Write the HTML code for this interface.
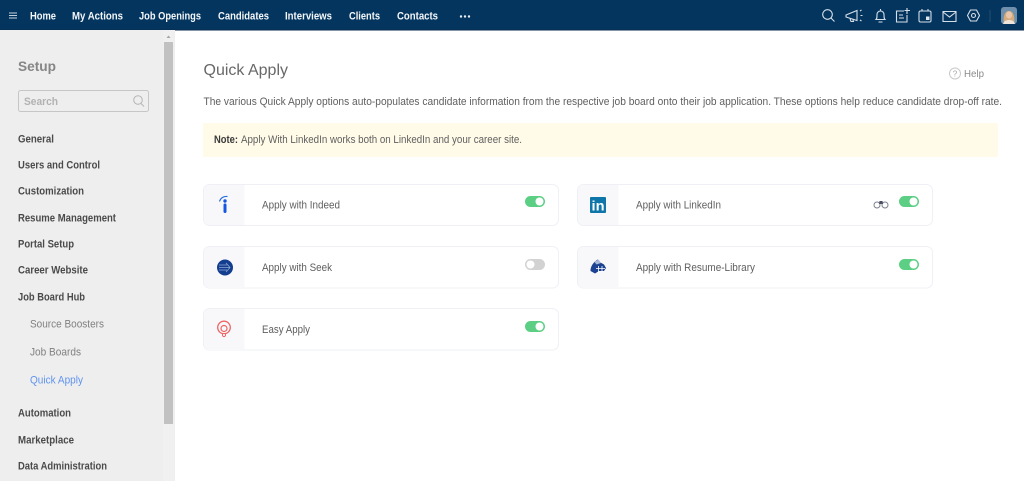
<!DOCTYPE html>
<html><head><meta charset="utf-8"><title>Quick Apply</title>
<style>
html,body{margin:0;padding:0;width:1024px;height:481px;overflow:hidden;background:#fff}
svg{display:block;font-family:"Liberation Sans",sans-serif;filter:blur(.35px)}
.nav{font-size:10.8px;font-weight:bold;fill:#f4f7fa}
.m{font-size:10.8px;font-weight:bold;fill:#4a4a4a}
.s{font-size:10.8px;fill:#808080}
.t{font-size:10.8px;fill:#5f5f5f}
.ic{fill:none;stroke:#d5dfe8;stroke-width:1.1}
.card{fill:#fff;stroke:#eef0f5;stroke-width:1}
.cell{fill:#f8f8fb}
</style></head><body>
<svg width="1024" height="481" viewBox="0 0 1024 481" xmlns="http://www.w3.org/2000/svg">
<rect width="1024" height="481" fill="#fff"/>
<rect width="1024" height="30" fill="#04355f"/>
<rect y="29.500" width="1024" height="1" fill="#0a2c4c"/>
<path d="M9 13h8M9 15.500h8M9 18h8" stroke="#c5d2de" stroke-width="1" fill="none"/>
<text class="nav" x="30" y="19.600" textLength="26" lengthAdjust="spacingAndGlyphs">Home</text>
<text class="nav" x="72" y="19.600" textLength="51" lengthAdjust="spacingAndGlyphs">My Actions</text>
<text class="nav" x="139" y="19.600" textLength="62" lengthAdjust="spacingAndGlyphs">Job Openings</text>
<text class="nav" x="218" y="19.600" textLength="51" lengthAdjust="spacingAndGlyphs">Candidates</text>
<text class="nav" x="285" y="19.600" textLength="47" lengthAdjust="spacingAndGlyphs">Interviews</text>
<text class="nav" x="349" y="19.600" textLength="31" lengthAdjust="spacingAndGlyphs">Clients</text>
<text class="nav" x="397" y="19.600" textLength="41" lengthAdjust="spacingAndGlyphs">Contacts</text>
<g fill="#e6edf3"><circle cx="461" cy="16.500" r="1.200"/><circle cx="465" cy="16.500" r="1.200"/><circle cx="469" cy="16.500" r="1.200"/></g>
<g class="ic">
<circle cx="827.500" cy="14.500" r="4.800"/><path d="M831 18l3.500 3.500"/>
<path d="M846 15l11-4.500v10L846 17zM850 18.500l1 3h2.500l-.8-2.500M860 11l1.500-1M860.500 15.500h2M860 20l1.500 1"/>
<path d="M876 19.500c1-1 1-2 1-5a3.500 3.500 0 0 1 7 0c0 3 0 4 1 5zM878.500 22h4M880.500 9v1.500"/>
<path d="M904 11h-7.500v11h10.500v-7M899 15h4M899 18h5M907 8v6M904.500 10.500h5.500"/>
<rect x="919" y="11" width="12" height="11" rx="1.500"/><path d="M922 9v2.500M928 9v2.500"/>
<path d="M943 11.500h13v10h-13zM943 12l6.500 5 6.500-5"/>
<path d="M970.500 10h6l3 5.500-3 5.500h-6l-3-5.500z" stroke-linejoin="round"/><circle cx="973.500" cy="15.500" r="2"/>
</g>
<rect x="926" y="16.500" width="3.500" height="3.500" fill="#dfe7ee"/>
<rect x="989.500" y="10" width="1" height="12" fill="#24506f"/>
<rect x="1001" y="7" width="16" height="17" rx="3" fill="#6f90ac"/>
<path d="M1004 24c-1-6 0-13 5-13s6 7 5 13z" fill="#d4ab7c"/>
<ellipse cx="1009" cy="15" rx="3" ry="3.600" fill="#e9c6ab"/>
<path d="M1003 24c1-3 3-4 6-4s5 1 6 4z" fill="#eee4da"/>

<rect y="30" width="175" height="451" fill="#eeeeee"/>
<rect x="163" y="30" width="11" height="451" fill="#f0f0f0"/>
<path d="M168.500 35.500l2 2.500h-4z" fill="#a5a5a5"/>
<rect x="164" y="42" width="9" height="382" fill="#c1c1c1"/>
<text x="18" y="71" font-size="14" font-weight="bold" fill="#868686" textLength="38" lengthAdjust="spacingAndGlyphs">Setup</text>
<rect x="18.500" y="90.500" width="130" height="21" rx="2" fill="#eeeeee" stroke="#c6c6c6"/>
<text x="24" y="105" font-size="11" font-weight="bold" fill="#b2b2b2" textLength="34" lengthAdjust="spacingAndGlyphs">Search</text>
<circle cx="138" cy="100" r="4.300" fill="none" stroke="#b5b5b5"/><path d="M141 103.500l3 3" stroke="#b5b5b5" fill="none"/>

<text class="m" x="18" y="142.600" textLength="36" lengthAdjust="spacingAndGlyphs">General</text>
<text class="m" x="18" y="168.600" textLength="82" lengthAdjust="spacingAndGlyphs">Users and Control</text>
<text class="m" x="18" y="194.600" textLength="66" lengthAdjust="spacingAndGlyphs">Customization</text>
<text class="m" x="18" y="221.600" textLength="98" lengthAdjust="spacingAndGlyphs">Resume Management</text>
<text class="m" x="18" y="247.600" textLength="56" lengthAdjust="spacingAndGlyphs">Portal Setup</text>
<text class="m" x="18" y="273.600" textLength="70" lengthAdjust="spacingAndGlyphs">Career Website</text>
<text class="m" x="18" y="300.600" textLength="67" lengthAdjust="spacingAndGlyphs">Job Board Hub</text>
<text class="s" x="30" y="327.600" textLength="74" lengthAdjust="spacingAndGlyphs">Source Boosters</text>
<text class="s" x="30" y="355.600" textLength="51" lengthAdjust="spacingAndGlyphs">Job Boards</text>
<text class="s" x="30" y="383.600" textLength="53" lengthAdjust="spacingAndGlyphs" style="fill:#5f93ee">Quick Apply</text>
<text class="m" x="18" y="416.600" textLength="53" lengthAdjust="spacingAndGlyphs">Automation</text>
<text class="m" x="18" y="443.600" textLength="56" lengthAdjust="spacingAndGlyphs">Marketplace</text>
<text class="m" x="18" y="469.600" textLength="89" lengthAdjust="spacingAndGlyphs">Data Administration</text>

<text x="203.500" y="75" font-size="16" fill="#686868" textLength="84.500" lengthAdjust="spacingAndGlyphs">Quick Apply</text>
<circle cx="955" cy="73.500" r="5.500" fill="none" stroke="#c9c9c9"/>
<text x="952.800" y="76.500" font-size="8" fill="#a5a5a5">?</text>
<text x="964" y="77" font-size="10.500" fill="#8a8a8a" textLength="20" lengthAdjust="spacingAndGlyphs">Help</text>
<text class="t" x="203.500" y="105" textLength="798.500" lengthAdjust="spacingAndGlyphs">The various Quick Apply options auto-populates candidate information from the respective job board onto their job application. These options help reduce candidate drop-off rate.</text>
<rect x="203" y="123" width="795" height="34" fill="#fffbe8"/>
<text x="214" y="143" font-size="10.800" font-weight="bold" fill="#3a3a3a" textLength="24" lengthAdjust="spacingAndGlyphs">Note:</text>
<text class="t" x="241" y="143" textLength="281" lengthAdjust="spacingAndGlyphs">Apply With LinkedIn works both on LinkedIn and your career site.</text>

<!-- cards -->
<g>
<rect class="card" x="203.500" y="184.500" width="355" height="41" rx="6"/>
<path class="cell" d="M244.500 185h-35a5.500 5.500 0 0 0-5.500 5.500v29a5.500 5.500 0 0 0 5.500 5.500h35z"/>
<rect class="card" x="203.500" y="246.500" width="355" height="41.500" rx="6"/>
<path class="cell" d="M244.500 247h-35a5.500 5.500 0 0 0-5.500 5.500v30a5.500 5.500 0 0 0 5.500 5.500h35z"/>
<rect class="card" x="203.500" y="308.500" width="355" height="41.500" rx="6"/>
<path class="cell" d="M244.500 309h-35a5.500 5.500 0 0 0-5.500 5.500v30a5.500 5.500 0 0 0 5.500 5.500h35z"/>
<rect class="card" x="577.500" y="184.500" width="355" height="41" rx="6"/>
<path class="cell" d="M618.500 185h-35a5.500 5.500 0 0 0-5.500 5.500v29a5.500 5.500 0 0 0 5.500 5.500h35z"/>
<rect class="card" x="577.500" y="246.500" width="355" height="41.500" rx="6"/>
<path class="cell" d="M618.500 247h-35a5.500 5.500 0 0 0-5.500 5.500v30a5.500 5.500 0 0 0 5.500 5.500h35z"/>
</g>
<text class="t" x="262" y="208.500" textLength="78" lengthAdjust="spacingAndGlyphs">Apply with Indeed</text>
<text class="t" x="262" y="271" textLength="70" lengthAdjust="spacingAndGlyphs">Apply with Seek</text>
<text class="t" x="262" y="333" textLength="48" lengthAdjust="spacingAndGlyphs">Easy Apply</text>
<text class="t" x="636" y="208.500" textLength="85" lengthAdjust="spacingAndGlyphs">Apply with LinkedIn</text>
<text class="t" x="636" y="271" textLength="119" lengthAdjust="spacingAndGlyphs">Apply with Resume-Library</text>

<!-- indeed -->
<path d="M219.500 201.500c1-3.500 4-5.500 8-5" fill="none" stroke="#2a6fdc" stroke-width="1.200"/>
<circle cx="225" cy="201" r="1.700" fill="#1558e0"/>
<rect x="223.500" y="203.500" width="3" height="9.500" rx="1.200" fill="#1558e0"/>
<!-- seek -->
<circle cx="225" cy="267.500" r="8" fill="#133d8f"/>
<path d="M219 265h8M219 267.500h11M219 270h8M226 263l4 4.500-4 4.500" fill="none" stroke="#8fa8d3" stroke-width=".8"/>
<!-- easy -->
<circle cx="224" cy="327.500" r="6.300" fill="none" stroke="#ef6464" stroke-width="1.300"/>
<circle cx="224" cy="328.500" r="3" fill="none" stroke="#ef6464" stroke-width="1.200"/>
<circle cx="224" cy="335" r="1.600" fill="#fff" stroke="#ef6464"/>
<!-- linkedin -->
<rect x="590" y="197" width="16" height="16" rx="1" fill="#0e76a8"/>
<text x="591.500" y="210.500" font-size="13.500" font-weight="bold" fill="#fff" textLength="13" lengthAdjust="spacingAndGlyphs">in</text>
<!-- resume-library -->
<path d="M590.500 271c0-4 2-7 4-9l3-2.500 3 3 3.500 2 2 3.500-2 3h-5l-4 2.500z" fill="#1c4391"/>
<path d="M594.500 262l4-2.500 2.500 3.500-4.500 1.500z" fill="#a9b9d6"/>
<path d="M596 268.500h9M598.500 266v6.500M602 266v5.500" stroke="#fff" stroke-width=".8" fill="none"/>
<!-- binoculars -->
<g fill="none" stroke="#7c828b" stroke-width="1">
<circle cx="877" cy="205" r="3"/><circle cx="885" cy="205" r="3"/>
</g>
<path d="M879.500 201h3l.5 3h-4z" fill="#4a5060"/>

<!-- toggles -->
<g fill="#5ccf85">
<rect x="525" y="196" width="20" height="11" rx="5.500"/>
<rect x="525" y="321" width="20" height="11" rx="5.500"/>
<rect x="899" y="196" width="20" height="11" rx="5.500"/>
<rect x="899" y="259" width="20" height="11" rx="5.500"/>
</g>
<rect x="525" y="259" width="20" height="11" rx="5.500" fill="#d2d2d2"/>
<g fill="#fff">
<circle cx="539.500" cy="201.500" r="4"/><circle cx="539.500" cy="326.500" r="4"/>
<circle cx="913.500" cy="201.500" r="4"/><circle cx="913.500" cy="264.500" r="4"/>
<circle cx="530.500" cy="264.500" r="4"/>
</g>
</svg>
</body></html>
